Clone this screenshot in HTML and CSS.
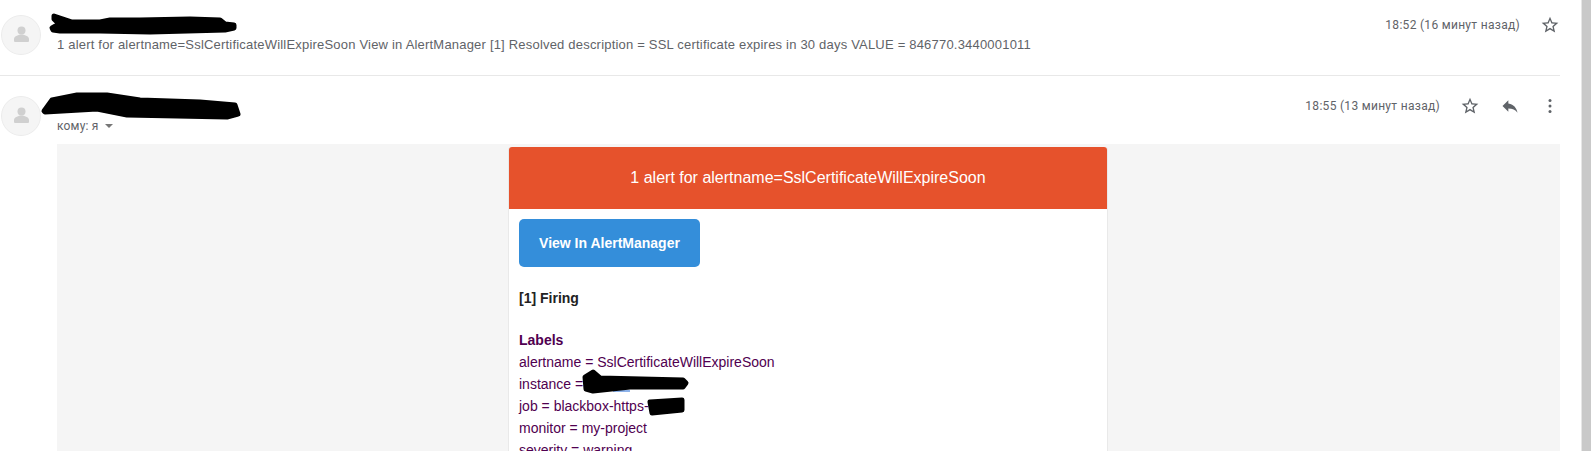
FILE: index.html
```html
<!DOCTYPE html>
<html lang="ru">
<head>
<meta charset="utf-8">
<title>Mail</title>
<link rel="stylesheet" href="styles.css">
</head>
<body>
<div class="window">
  <main class="thread">
    <section class="msg collapsed">
      <div class="avatar"><svg viewBox="0 0 40 40" width="40" height="40"><circle cx="20" cy="20" r="19.5" fill="#f5f5f5" stroke="#ececec"/><circle cx="20.5" cy="15.5" r="4" fill="#d0d0d0"/><path d="M13 26v-2c0-3 5-4.500 7.500-4.500S28 21 28 24v2a1 1 0 0 1-1 1H14a1 1 0 0 1-1-1z" fill="#d0d0d0"/></svg></div>
      <div class="msg-body">
        <div class="sender"></div>
        <div class="snippet">1 alert for alertname=SslCertificateWillExpireSoon View in AlertManager [1] Resolved description = SSL certificate expires in 30 days VALUE = 846770.3440001011</div>
      </div>
      <div class="meta">
        <span class="time">18:52 (16 минут назад)</span>
        <svg class="icon star" viewBox="0 0 24 24" width="20" height="20"><path d="M22 9.240l-7.190-.62L12 2 9.190 8.630 2 9.240l5.460 4.730L5.820 21 12 17.270 18.180 21l-1.630-7.030L22 9.240zM12 15.400l-3.760 2.270 1-4.280-3.320-2.880 4.380-.38L12 6.100l1.710 4.040 4.380.38-3.320 2.880 1 4.280L12 15.400z"/></svg>
      </div>
    </section>
    <section class="msg expanded">
      <div class="avatar"><svg viewBox="0 0 40 40" width="40" height="40"><circle cx="20" cy="20" r="19.5" fill="#f5f5f5" stroke="#ececec"/><circle cx="20.5" cy="15.5" r="4" fill="#d0d0d0"/><path d="M13 26v-2c0-3 5-4.500 7.500-4.500S28 21 28 24v2a1 1 0 0 1-1 1H14a1 1 0 0 1-1-1z" fill="#d0d0d0"/></svg></div>
      <div class="msg-body">
        <div class="sender"></div>
        <div class="to">кому: я <span class="caret"></span></div>
      </div>
      <div class="meta">
        <span class="time">18:55 (13 минут назад)</span>
        <svg class="icon star" viewBox="0 0 24 24" width="20" height="20"><path d="M22 9.240l-7.190-.62L12 2 9.190 8.630 2 9.240l5.460 4.730L5.820 21 12 17.270 18.180 21l-1.630-7.030L22 9.240zM12 15.400l-3.760 2.270 1-4.280-3.320-2.880 4.380-.38L12 6.100l1.710 4.040 4.380.38-3.320 2.880 1 4.280L12 15.400z"/></svg>
        <svg class="icon reply" viewBox="0 0 24 24" width="20" height="20"><path d="M10 9V5l-7 7 7 7v-4.100c5 0 8.500 1.600 11 5.100-1-5-4-10-11-11z"/></svg>
        <svg class="icon more" viewBox="0 0 24 24" width="20" height="20"><circle cx="12" cy="5.500" r="1.800"/><circle cx="12" cy="12" r="1.800"/><circle cx="12" cy="18.500" r="1.800"/></svg>
      </div>
    </section>
    <div class="mail-bg">
      <article class="card">
        <h1 class="card-title">1 alert for alertname=SslCertificateWillExpireSoon</h1>
        <div class="card-content">
          <a class="button">View In AlertManager</a>
          <p class="firing">[1] Firing</p>
          <div class="labels">
            <strong>Labels</strong><br>
            alertname = SslCertificateWillExpireSoon<br>
            instance = <br>
            job = blackbox-https-<br>
            monitor = my-project<br>
            severity = warning
          </div>
        </div>
      </article>
    </div>
    <svg class="scribble" viewBox="0 0 1591 451" width="1591" height="451" aria-hidden="true">
      <path class="underline" d="M613 391h17"/>
      <g class="blob">
        <path d="M54 16L60 18L72 22L100 22L110 20L140 20L190 19L220 20L225 24L234 25L234 28L225 30L150 32L100 31L60 31L53 30L52 28L59 24L54 19z"/>
        <path d="M44 111L52 100L77 95L107 95L140 100L200 102L235 105L238 114L227 117L127 115L97 109L45 112z"/>
        <path d="M585 377L593 372L600 378L683 380L686 383L683 387L630 387L593 391L586 389z"/>
        <path d="M650 402L682 400L682 410L652 413z"/>
      </g>
    </svg>
  </main>
  <aside class="scrollbar"></aside>
</div>
</body>
</html>
```
FILE: styles.css
```css
* { box-sizing: border-box; }
html, body { margin: 0; height: 100%; overflow: hidden; background: #fff; }
.window { display: flex; height: 451px; }
.thread { position: relative; width: 1560px; font-family: Roboto, sans-serif; }
.msg { display: flex; padding-left: 1px; }
.collapsed { height: 76px; padding-top: 15px; border-bottom: 1px solid #e8e8e8; }
.expanded { height: 68px; padding-top: 20px; }
.avatar { width: 40px; height: 40px; flex: none; }
.msg-body { flex: 1; padding-left: 16px; }
.sender { height: 13px; }
.snippet { margin-top: 8px; font: 13px/18px "Liberation Sans", sans-serif; color: #5f6368; letter-spacing: .2px; white-space: nowrap; }
.to { margin-top: 9px; font: 12px/16px Roboto, sans-serif; color: #5f6368; letter-spacing: .2px; }
.caret { display: inline-block; margin-left: 3px; vertical-align: 2px; border: 4px solid transparent; border-top-color: #777; border-bottom: 0; }
.meta { display: flex; align-items: flex-start; flex: none; }
.time { font-size: 12px; line-height: 18px; color: #5f6368; margin-top: 1px; letter-spacing: .3px; white-space: nowrap; }
.icon { fill: #5f6368; flex: none; }
.star { margin-left: 20px; }
.reply { margin-left: 20px; }
.more { margin-left: 20px; }
.mail-bg { height: 307px; background: #f5f5f5; margin-left: 57px; overflow: hidden; display: flex; justify-content: center; padding-top: 3px; padding-right: 1px; }
.card { width: 600px; height: 400px; background: #fff; border: 1px solid #e9e9e9; border-top: 0; border-radius: 3px 3px 0 0; font-family: "Liberation Sans", sans-serif; font-size: 14px; line-height: 22px; }
.card-title { margin: 0; height: 62px; background: #e6522c; color: #fff; font-size: 16px; font-weight: 400; line-height: 62px; text-align: center; border-radius: 3px 3px 0 0; }
.card-content { padding: 10px; }
.button { display: block; width: 181px; height: 48px; background: #348eda; border-radius: 5px; color: #fff; font-weight: 700; line-height: 48px; text-align: center; }
.firing { margin: 20px 0 20px; font-weight: 700; color: #222; }
.labels { color: #500050; }
.scribble { position: absolute; left: 0; top: 0; pointer-events: none; }
.blob { fill: #000; stroke: #000; stroke-width: 5; stroke-linejoin: round; }
.underline { fill: none; stroke: #1a66d6; stroke-width: 1; }
.scrollbar { width: 31px; display: flex; justify-content: flex-end; }
.scrollbar::after { content: ""; width: 9px; background: #c9c9c9; border-left: 1px solid #e6e6e6; }
```
